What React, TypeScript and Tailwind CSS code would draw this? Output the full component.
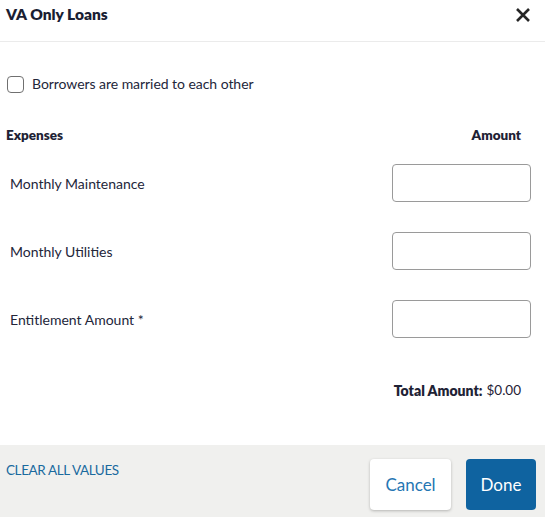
import React from "react";

const rows = ["Monthly Maintenance", "Monthly Utilities", "Entitlement Amount *"];

export default function App() {
  return (
    <div
      className="w-[545px] h-[517px] flex flex-col bg-white text-[#1e2235]"
      style={{ fontFamily: "Lato, 'Noto Sans', sans-serif" }}
    >
      <div className="h-[42px] shrink-0 border-b border-[#ebebeb] flex justify-between items-start pl-[6px] pr-[14px] pt-[4px]">
        <div className="text-[15.5px] font-extrabold leading-[20px] text-[#1a1e33]">VA Only Loans</div>
        <svg width="16" height="16" viewBox="0 0 16 16" className="mt-[3px]">
          <path d="M2 2 L14 14 M14 2 L2 14" stroke="#262626" strokeWidth="2.6" strokeLinecap="butt" />
        </svg>
      </div>
      <div className="flex-1 flex flex-col">
        <div className="mt-[33px] flex items-center h-[18px] pl-[7px] gap-[8px]">
          <div className="w-[17px] h-[17px] rounded-[4px] border border-[#707070] bg-white" />
          <span className="text-[14px] leading-[18px] tracking-[-0.05px] text-[#23263a]">Borrowers are married to each other</span>
        </div>
        <div className="mt-[32px] flex justify-between items-center h-[20px] pl-[6px] pr-[24px] text-[13.5px] font-extrabold">
          <span>Expenses</span>
          <span>Amount</span>
        </div>
        <div className="mt-[19px] flex flex-col gap-[30px]">
          {rows.map((r) => (
            <div key={r} className="flex items-center justify-between h-[38px] pl-[10px] pr-[14px]">
              <span className="text-[14px] text-[#23263a]">{r}</span>
              <div className="w-[139px] h-[38px] rounded-[4px] border border-[#9a9a9a] bg-white" />
            </div>
          ))}
        </div>
        <div className="mt-[42px] h-[20px] flex justify-end items-center pr-[24px] text-[13.5px]">
          <span className="font-extrabold text-[14px] mr-[4px]">Total Amount:</span>
          <span>$0.00</span>
        </div>
      </div>
      <div className="h-[72px] shrink-0 bg-[#f0f0ee] flex justify-between items-start pl-[6px] pr-[9px]">
        <span className="mt-[16px] text-[13.5px] leading-[18px] tracking-[-0.4px] text-[#1a6a9e]">CLEAR ALL VALUES</span>
        <div className="mt-[14px] flex gap-[15px]">
          <button className="w-[81px] h-[51px] rounded-[4px] bg-white shadow-[0_1px_3px_rgba(0,0,0,0.25)] text-[#2576b3] text-[17px] pt-[1px]">
            Cancel
          </button>
          <button className="w-[70px] h-[51px] rounded-[4px] bg-[#0f63a0] text-white text-[17px] pt-[1px]">Done</button>
        </div>
      </div>
    </div>
  );
}
